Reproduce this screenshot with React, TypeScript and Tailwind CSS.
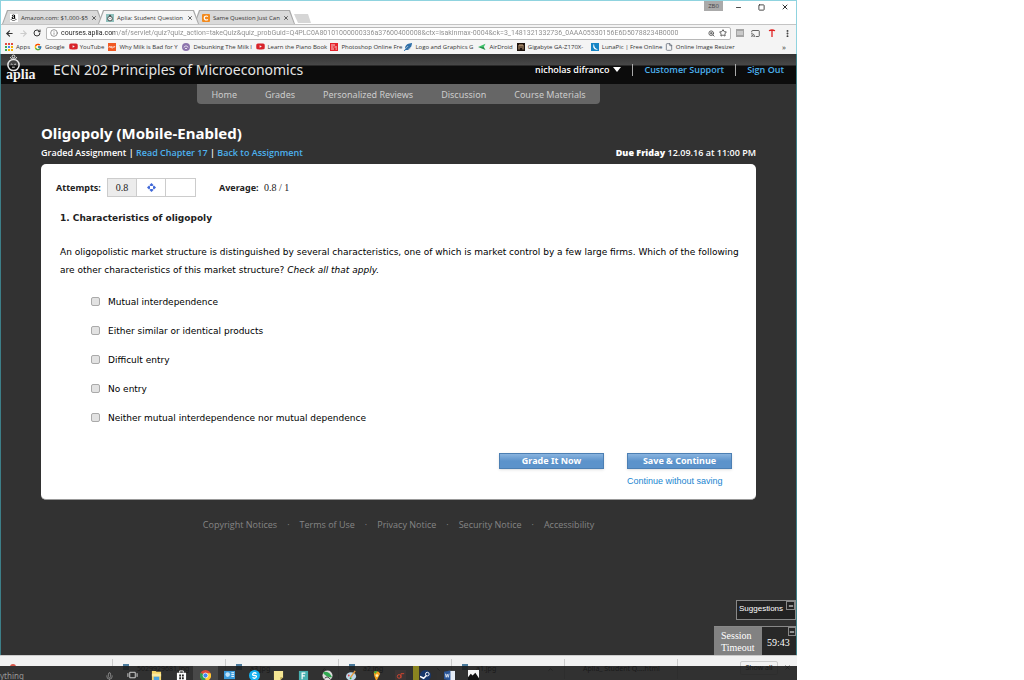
import React from 'react';
import clsx from 'clsx';
import { FaAmazon, FaYoutube, FaFeatherAlt } from 'react-icons/fa';
import { FcGoogle } from 'react-icons/fc';
import { ArrowLeft, ArrowRight, RotateCw, Info, ZoomIn, Star, Cast, EllipsisVertical, X, Minus, Square, File, Mic, ChevronUp } from 'lucide-react';

const tabShape = '[clip-path:polygon(0_100%,5px_0,calc(100%-5px)_0,100%_100%)]';

const AmazonIcon = () => (
    <span className="flex h-2 w-2 items-center justify-center bg-white text-black">
        <FaAmazon size={7} />
    </span>
);

const ApliaIcon = () => (
    <svg viewBox="0 0 8 8" className="h-2 w-2">
        <rect width="8" height="8" fill="#8fc0bd" />
        <circle cx="4" cy="4.6" r="2.3" fill="#fff" stroke="#333" strokeWidth="0.8" />
        <path d="M3 1.4h2M3.3 4.4h.5M4.4 4.4h.5" stroke="#333" strokeWidth="0.8" />
    </svg>
);

const CheggIcon = () => (
    <svg viewBox="0 0 8 8" className="h-2 w-2">
        <rect width="8" height="8" rx="1" fill="#f28a1e" />
        <path d="M5.8 2.7A2 2 0 1 0 5.8 5.3" fill="none" stroke="#fff" strokeWidth="1.2" />
    </svg>
);

const AppsIcon = () => (
    <svg viewBox="0 0 8 8" className="h-2 w-2">
        {['#e04a3f', '#e04a3f', '#e04a3f', '#3aa757', '#4285f4', '#f4b400', '#3aa757', '#f4b400', '#f4b400'].map((c, i) => (
            <rect key={i} x={(i % 3) * 3} y={Math.floor(i / 3) * 3} width="2" height="2" fill={c} />
        ))}
    </svg>
);

const OrangeIcon = () => (
    <svg viewBox="0 0 8 8" className="h-2 w-2">
        <rect width="8" height="8" fill="#f15a24" />
        <path d="M1 5V3.5h1.5V5M3.5 3v2H5V3M6 5V3.5h1.2" fill="none" stroke="#fff" strokeWidth="0.6" />
    </svg>
);

const PurpleIcon = () => (
    <svg viewBox="0 0 8 8" className="h-2 w-2">
        <circle cx="4" cy="4" r="4" fill="#8d75ad" />
        <path d="M2 4.5C2 2.5 6 2.5 6 4.5M3 5.5h2" fill="none" stroke="#fff" strokeWidth="0.8" />
    </svg>
);

const RedIcon = () => (
    <svg viewBox="0 0 8 8" className="h-2 w-2">
        <rect width="8" height="8" fill="#e5232b" />
        <path d="M1 2h4M1 4h2.5M4.5 4H7M1 6h3M5.5 6H7" stroke="#fff" strokeWidth="0.8" />
    </svg>
);

const AirDroidIcon = () => (
    <svg viewBox="0 0 8 8" className="h-2 w-2">
        <path d="M0 4 7.5.8 5.8 4z" fill="#3fc06a" />
        <path d="M0 4h5.8l1.7 3z" fill="#25944a" />
    </svg>
);

const GigabyteIcon = () => (
    <svg viewBox="0 0 8 8" className="h-2 w-2">
        <rect width="8" height="8" fill="#1c120c" />
        <path d="M2 6.5V2h4v4.5M4 2v3" fill="none" stroke="#d9b48a" strokeWidth="0.9" />
    </svg>
);

const LunaIcon = () => (
    <svg viewBox="0 0 8 8" className="h-2 w-2">
        <rect width="8" height="8" fill="#1685c5" />
        <path d="M3 .8C1 4 3 7.5 7.2 6.6 4.6 6 3 4 3 .8z" fill="#fff" />
    </svg>
);

const YoutubeIcon = () => <FaYoutube size={9} className="-mr-px text-[#d8232a]" />;

const tabs = [
    { title: 'Amazon.com: $1,000-$5', icon: <AmazonIcon />, active: false },
    { title: 'Aplia: Student Question', icon: <ApliaIcon />, active: true },
    { title: 'Same Question Just Can', icon: <CheggIcon />, active: false },
];

const bookmarks = [
    { label: 'Apps', icon: <AppsIcon />, wide: false },
    { label: 'Google', icon: <FcGoogle size={8} />, wide: false },
    { label: 'YouTube', icon: <YoutubeIcon />, wide: false },
    { label: 'Why Milk is Bad for Y', icon: <OrangeIcon />, wide: true },
    { label: 'Debunking The Milk I', icon: <PurpleIcon />, wide: true },
    { label: 'Learn the Piano Book', icon: <YoutubeIcon />, wide: true },
    { label: 'Photoshop Online Fre', icon: <RedIcon />, wide: true },
    { label: 'Logo and Graphics G', icon: <FaFeatherAlt size={8} className="text-[#2f6fa8]" />, wide: true },
    { label: 'AirDroid', icon: <AirDroidIcon />, wide: false },
    { label: 'Gigabyte GA-Z170X-', icon: <GigabyteIcon />, wide: true },
    { label: 'LunaPic | Free Online', icon: <LunaIcon />, wide: true },
    { label: 'Online Image Resizer', icon: <File size={8} className="text-gray-600" />, wide: true },
];

const navItems = ['Home', 'Grades', 'Personalized Reviews', 'Discussion', 'Course Materials'];

const options = [
    'Mutual interdependence',
    'Either similar or identical products',
    'Difficult entry',
    'No entry',
    'Neither mutual interdependence nor mutual dependence',
];

const footerLinks = ['Copyright Notices', 'Terms of Use', 'Privacy Notice', 'Security Notice', 'Accessibility'];

const downloads = ['', '5029929681.jpg', 'a3.jpg', 'a2.jpg', 'a1.jpg', 'Aplia_ Student Q....html'];

const BrowserChrome = () => (
    <div className="border-x border-t border-[#8fd3df] bg-white font-['Open_Sans',sans-serif] text-[#333]">
        <div className="flex h-[23px] items-end pl-px">
            {tabs.map((tab) => (
                <div key={tab.title} className={clsx('-mr-[5px] h-[14px] w-[101px] shrink-0 bg-[#a8a8a8] px-px pt-px', tabShape, tab.active && 'z-10')}>
                    <div className={clsx('flex h-full items-center gap-[3px] pr-[5px] pl-[7px]', tabShape, tab.active ? 'bg-[#f4f4f4]' : 'bg-[#d9d9d9]')}>
                        {tab.icon}
                        <span className="text-[6px] leading-[12px] whitespace-nowrap">{tab.title}</span>
                        <button aria-label="Close tab" className="ml-auto">
                            <X size={6} strokeWidth={3} />
                        </button>
                    </div>
                </div>
            ))}
            <button aria-label="New tab" className="mb-px ml-1 h-[9px] w-[17px] bg-[#d6d6d6] [clip-path:polygon(0_0,14px_0,100%_100%,4px_100%)]" />
            <div className="ml-auto flex items-center gap-4 self-start pr-[7px]">
                <span className="flex h-[10px] w-[19px] items-center justify-center bg-[#aaa] text-[6px] text-[#444]">ZB0</span>
                <button aria-label="Minimize" className="-ml-1 pt-0.5"><Minus size={7} strokeWidth={3} /></button>
                <button aria-label="Maximize" className="pt-0.5"><Square size={7} strokeWidth={3} /></button>
                <button aria-label="Close window" className="pt-0.5"><X size={8} strokeWidth={3} /></button>
            </div>
        </div>

        <div className="flex h-[17px] items-center border-t border-[#c4c4c4] bg-[#f4f4f4] pl-1">
            <div className="flex w-[41px] items-center gap-[5px]">
                <button aria-label="Back"><ArrowLeft size={9} strokeWidth={3} /></button>
                <button aria-label="Forward" className="text-[#ccc]"><ArrowRight size={9} strokeWidth={3} /></button>
                <button aria-label="Reload"><RotateCw size={8} strokeWidth={3} /></button>
            </div>
            <div className="flex h-[13px] flex-1 items-center rounded-[2px] border border-[#b8b8b8] bg-white px-[3px]">
                <Info size={8} className="mr-[3px] shrink-0 text-[#666]" />
                <input
                    type="text"
                    aria-label="Address"
                    className="h-[11px] min-w-0 flex-1 bg-[linear-gradient(90deg,#222_54px,#8a8a8a_54px)] bg-clip-text font-[Roboto,sans-serif] text-[7px] text-transparent outline-none"
                    defaultValue="courses.aplia.com/af/servlet/quiz?quiz_action=takeQuiz&quiz_probGuid=Q4PLC0A80101000000336a37600400008&ctx=isakinmax-0004&ck=3_1481321332736_0AAA05530156E6D50788234B0000"
                />
                <ZoomIn size={7} strokeWidth={3} className="mr-1 text-[#555]" />
                <Star size={8} strokeWidth={3} className="text-[#555]" />
            </div>
            <div className="flex w-[65px] items-center justify-between pr-1 pl-[5px]">
                <svg viewBox="0 0 8 8" className="h-2 w-2">
                    <rect width="8" height="8" fill="#a5a5a5" />
                    <path d="M1 3h6M1 5h6" stroke="#eee" />
                </svg>
                <Cast size={9} strokeWidth={2} />
                <svg viewBox="0 0 8 8" className="h-2 w-2">
                    <path d="M1 1.8Q4 .2 7 1.8M4 1.2V8" fill="none" stroke="#e02222" strokeWidth="1.3" />
                </svg>
                <EllipsisVertical size={9} strokeWidth={3} />
            </div>
        </div>

        <div className="flex h-[13px] items-center gap-1 bg-[#f4f4f4] pb-0.5 pl-1 text-[6px] text-[#333]">
            {bookmarks.map((b) => (
                <a key={b.label} href="#" className="flex shrink-0 items-center gap-[3px]">
                    {b.icon}
                    <span className={clsx('leading-[10px] whitespace-nowrap', b.wide && 'w-[59px]')}>{b.label}</span>
                </a>
            ))}
            <button aria-label="More bookmarks" className="mr-[10px] ml-auto text-[8px] leading-[10px]">»</button>
        </div>
    </div>
);

const Logo = () => (
    <svg viewBox="0 0 32 30" className="h-[30px] w-8" fill="none" stroke="#e6e6e6">
        <circle cx="8.5" cy="11" r="5.6" strokeWidth="1.5" />
        <circle cx="8.5" cy="2.4" r="1.4" strokeWidth="1" />
        <path d="M5.2 3 6.600 5h3.800L11.800 3M5.800 10.500q.8-.8 1.700 0M9.300 10.500q.8-.8 1.700 0M7 13.200h2.800" strokeWidth="0.9" />
        <text x="1" y="25" fill="#f2f2f2" stroke="none" fontFamily="Liberation Serif, serif" fontWeight="700" fontSize="14">aplia</text>
    </svg>
);

const Header = () => (
    <header className="flex h-[30px] items-center justify-between bg-[linear-gradient(#333,#484848_11px,#0c0c0c_12px)] pr-3 pl-1 text-white">
        <div className="flex items-center gap-4">
            <Logo />
            <h1 className="pt-0.5 text-[14px] leading-4 text-[#e4e4e4]">ECN 202 Principles of Microeconomics</h1>
        </div>
        <div className="flex items-center gap-[11px] pt-px font-['Open_Sans',sans-serif] text-[9px] font-semibold">
            <button className="flex items-center gap-1">
                nicholas difranco
                <svg viewBox="0 0 8 5" className="h-[5px] w-2"><path d="M0 0h8L4 5z" fill="#fff" /></svg>
            </button>
            <span className="h-3 w-px bg-[#aaa]" />
            <a href="#" className="text-[#4db1ee]">Customer Support</a>
            <span className="h-3 w-px bg-[#aaa]" />
            <a href="#" className="text-[#4db1ee]">Sign Out</a>
        </div>
    </header>
);

const QuestionCard = () => (
    <section className="rounded-[5px] border-b border-[#999] bg-white px-[15px] pt-[14px] pb-[11px] text-[#222]">
        <div className="flex items-center text-[9px]">
            <span className="w-[51px] font-bold">Attempts:</span>
            <div className="flex h-[19px] divide-x divide-[#ccc] border border-[#ccc] font-['Liberation_Serif',serif] text-[10px]">
                <span className="flex w-[29px] items-center justify-center bg-[#ececec]">0.8</span>
                <span className="flex w-[29px] items-center justify-center">
                    <svg viewBox="0 0 9 9" className="h-[9px] w-[9px]" fill="#4169d8">
                        <path d="M4.500 0 6.500 2l-1 1h-2l-1-1zM4.500 9l2-2-1-1h-2l-1 1zM0 4.500l2-2 1 1v2l-1 1zM9 4.500l-2-2-1 1v2l1 1z" />
                    </svg>
                </span>
                <span className="w-[29px]" />
            </div>
            <span className="ml-[23px] w-[45px] font-bold">Average:</span>
            <span className="font-['Liberation_Serif',serif] text-[10px]">0.8 / 1</span>
        </div>

        <div className="px-1 font-['DejaVu_Sans',sans-serif] text-[9px]">
            <h3 className="mt-3 leading-[18px] font-bold">1. Characteristics of oligopoly</h3>
            <p className="mt-4 -mr-3 leading-[18px] text-black">
                An oligopolistic market structure is distinguished by several characteristics, one of which is market control by a few large firms. Which of the following are other characteristics of this market structure? <em>Check all that apply.</em>
            </p>
            <div className="mt-[9px] pl-[31px] text-black">
                {options.map((option) => (
                    <label key={option} className="flex h-[29px] items-center gap-2">
                        <input type="checkbox" className="mb-[3px] h-[9px] w-[9px] appearance-none rounded-[2px] border border-[#aaa] bg-[#e2e2e2] checked:bg-[#5b93cc]" />
                        {option}
                    </label>
                ))}
            </div>
        </div>

        <div className="mt-5 mr-[9px] flex justify-end gap-[23px] text-[9px] font-bold text-white">
            <button className="h-4 w-[105px] self-start border border-[#4c7fb3] bg-linear-to-b from-[#8ab4df] to-[#5c93cb] to-50% leading-[14px] shadow-sm">Grade It Now</button>
            <div className="w-[105px]">
                <button className="block h-4 w-full border border-[#4c7fb3] bg-linear-to-b from-[#8ab4df] to-[#5c93cb] to-50% leading-[14px] shadow-sm">Save &amp; Continue</button>
                <a href="#" className="mt-[5px] block font-['Liberation_Sans',sans-serif] leading-[14px] font-normal text-[#1a85d0]">Continue without saving</a>
            </div>
        </div>
    </section>
);

const Widgets = () => (
    <div className="mt-auto flex flex-col items-end gap-[6px] text-white">
        <div className="flex h-5 w-[60px] justify-between border border-[#888] bg-[#222] pl-[2px]">
            <span className="font-['Liberation_Sans',sans-serif] text-[8px] leading-4">Suggestions</span>
            <button aria-label="Hide suggestions" className="flex h-[9px] w-[9px] items-center justify-center border border-[#888]"><Minus size={6} strokeWidth={4} /></button>
        </div>
        <div className="flex h-[29px] w-[82px] border-t border-[#888] bg-[#282828] font-['Liberation_Serif',serif] text-[10px]">
            <span className="w-[48px] bg-[#828282] pt-[3px] pl-[7px] leading-3">Session Timeout</span>
            <span className="flex-1 pt-[11px] pl-[5px] leading-[10px]">59:43</span>
            <button aria-label="Hide timer" className="-ml-2 flex h-[9px] w-2 items-center justify-center border border-[#888]"><Minus size={6} strokeWidth={4} /></button>
        </div>
    </div>
);

const taskIcons = [
    <svg viewBox="0 0 12 12" fill="none" stroke="#ddd"><path d="M3 2.500h6v6H3zM1 3.500v4M11 3.500v4" /></svg>,
    <svg viewBox="0 0 12 12"><path d="M1 1h4l1 1h5v9H1z" fill="#f6d669" /><path d="M3 7h6v5H3z" fill="#4aa3df" /><path d="M1 4h10v3H1z" fill="#fbe9a0" /></svg>,
    <svg viewBox="0 0 12 12"><path d="M1 3h10v9H1z" fill="#fff" /><path d="M4 3V1h4v2" fill="none" stroke="#fff" /><path d="M3.500 5h2v2h-2zM6.500 5h2v2h-2zM3.500 8h2v2h-2zM6.500 8h2v2h-2z" fill="#222" /></svg>,
    <svg viewBox="0 0 12 12"><circle cx="6" cy="6" r="6" fill="#dd4b39" /><path d="M6 6 .8 3A6 6 0 0 0 6 12z" fill="#2e9e4f" /><path d="M6 6v6a6 6 0 0 0 5.500-8.500H6z" fill="#fc3" /><circle cx="6" cy="6" r="2.700" fill="#4285f4" stroke="#fff" strokeWidth="0.8" /></svg>,
    <svg viewBox="0 0 12 12"><path d="M0 1h12v9H0z" fill="#3a9bdc" /><circle cx="4" cy="5" r="2.500" fill="#bfe3fa" /><path d="M8 3h3M8 5h3M8 7h3" stroke="#fff" /></svg>,
    <svg viewBox="0 0 12 12"><circle cx="6" cy="6" r="6" fill="#14b0ef" /><path d="M8 4Q7.500 3 6 3T4 4.500 6 6t2 1.500T6 9 4 8" fill="none" stroke="#fff" strokeWidth="1.400" /></svg>,
    <svg viewBox="0 0 12 12"><path d="M1 1h10v7l-3 3H1z" fill="#f5e694" /><path d="M11 8 8 11V8z" fill="#b8a34c" /></svg>,
    <svg viewBox="0 0 12 12"><path d="M1 1h10v11H1z" fill="#48b0b0" /><path d="M4.500 10V3.500H8M4.500 6.500h3" fill="none" stroke="#fff" strokeWidth="1.300" /></svg>,
    <svg viewBox="0 0 12 12"><circle cx="6" cy="6" r="5.500" fill="#ddd" /><path d="M1 3c4-3 8 0 10 5-4 0-7-1-10-5z" fill="#30a850" /><path d="M3 9q3-3 6 1" stroke="#333" fill="none" /></svg>,
    <svg viewBox="0 0 12 12"><ellipse cx="5.500" cy="7" rx="5.500" ry="4.500" fill="#bcd8ea" /><circle cx="3" cy="6" r="1" fill="#d44" /><circle cx="5" cy="9" r="1" fill="#3a3" /><path d="m5 8 5-7" stroke="#e59a3c" strokeWidth="1.500" /></svg>,
    <svg viewBox="0 0 12 12"><path d="M3 2q5-2 7 2L6 12Q3 8 3 2z" fill="#f6a21c" /><path d="M3 3q1-3 4-2L5 4z" fill="#48a83d" /><circle cx="6.500" cy="6" r="1.500" fill="#fff2b0" /></svg>,
    <svg viewBox="0 0 12 12"><path d="M0 0h12v12H0z" fill="#3d3535" /><circle cx="4.500" cy="7" r="2" fill="none" stroke="#d8462f" /><path d="M6.500 9V4H10" fill="none" stroke="#d8462f" /></svg>,
    <svg viewBox="0 0 12 12"><circle cx="6" cy="6" r="6" fill="#16366b" /><circle cx="8" cy="4.500" r="2" fill="none" stroke="#fff" /><path d="m0 7 4 2 3-3" fill="none" stroke="#fff" strokeWidth="1.600" /></svg>,
    <svg viewBox="0 0 12 12"><path d="M5 1h7v10H5z" fill="#e6edf7" /><path d="M0 2l7-1.500v11L0 10z" fill="#2b579a" /><path d="m1.500 4 .9 4 1.100-3.500L4.600 8l1-4" fill="none" stroke="#fff" strokeWidth="0.8" /></svg>,
    <svg viewBox="0 0 12 12"><path d="M0 0h12v12H0z" fill="#f5f5f5" /><path d="M0 12V8l3-4 2 2 3-3 4 6v3z" fill="#111" /></svg>,
];

const BottomBars = () => (
    <div className="relative h-[25px] overflow-hidden bg-[#f2f2f2] text-[7px] text-black">
        <div className="flex items-start border-t border-[#ccc]">
            {downloads.map((name, i) => (
                <div key={i} className="mt-[3px] flex h-5 w-[113px] items-center gap-2 border-r border-[#ccc] px-[10px]">
                    <span className={clsx('mb-1 h-[6px] w-[6px]', i % 5 === 0 ? 'rounded-full bg-[#d8574a]' : 'bg-[#4a7a9c]')} />
                    <span className="flex-1 whitespace-nowrap">{name}</span>
                    {name && <ChevronUp size={7} />}
                </div>
            ))}
            <button className="mt-[5px] mr-[6px] ml-auto h-[14px] w-[38px] rounded-[2px] border border-[#ccc]">Show all</button>
            <button aria-label="Close downloads" className="mt-2 mr-[6px]"><X size={7} /></button>
        </div>
        <div className="absolute inset-x-0 bottom-0 flex h-[14px] bg-[#1c1c1c]/90">
            <div className="flex w-[120px] items-center justify-between bg-[#333] pt-[6px] pr-[6px] text-[8px] leading-[8px] text-[#999]">
                ything
                <Mic size={9} />
            </div>
            <div className="flex w-[366px]">
                {taskIcons.map((icon, i) => (
                    <button
                        key={i}
                        aria-label={`Task ${i + 1}`}
                        className={clsx('flex flex-1 justify-center pt-1 [&>svg]:h-[11px] [&>svg]:w-[11px]', i === 3 && 'bg-[#484848]', i === 12 && 'bg-[linear-gradient(90deg,#8a8420_6px,#303030_6px)]')}
                    >
                        {icon}
                    </button>
                ))}
            </div>
        </div>
    </div>
);

const App = () => {
    return (
        <div className="min-h-screen bg-white font-['Noto_Sans',sans-serif]">
            <div className="mr-[227px] flex min-h-screen flex-col">
                <BrowserChrome />
                <div className="flex flex-1 flex-col border-x border-[#3d7f88] bg-[#323232]">
                    <Header />
                    <nav className="mx-auto flex h-5 items-center gap-7 rounded-b-[4px] bg-[#666] px-[14px] pt-px text-[9px] text-[#ccc]">
                        {navItems.map((item) => (
                            <a key={item} href="#">{item}</a>
                        ))}
                    </nav>

                    <main className="mx-10 mt-[19px]">
                        <h2 className="text-[15px] leading-5 font-bold text-white">Oligopoly (Mobile-Enabled)</h2>
                        <div className="mt-1 mb-[5px] flex justify-between font-['Open_Sans',sans-serif] text-[9px] leading-3 font-semibold text-white">
                            <p>
                                Graded Assignment | <a href="#" className="text-[#4db1ee]">Read Chapter 17</a> | <a href="#" className="text-[#4db1ee]">Back to Assignment</a>
                            </p>
                            <p><b>Due Friday</b> 12.09.16 at 11:00 PM</p>
                        </div>
                        <QuestionCard />
                    </main>

                    <footer className="mt-[18px] flex justify-center gap-[10px] font-['Open_Sans',sans-serif] text-[9px] leading-[14px] text-[#858585]">
                        {footerLinks.map((link, i) => (
                            <React.Fragment key={link}>
                                {i > 0 && <span>·</span>}
                                <a href="#">{link}</a>
                            </React.Fragment>
                        ))}
                    </footer>

                    <Widgets />
                </div>
                <BottomBars />
            </div>
        </div>
    );
};

export default App;
